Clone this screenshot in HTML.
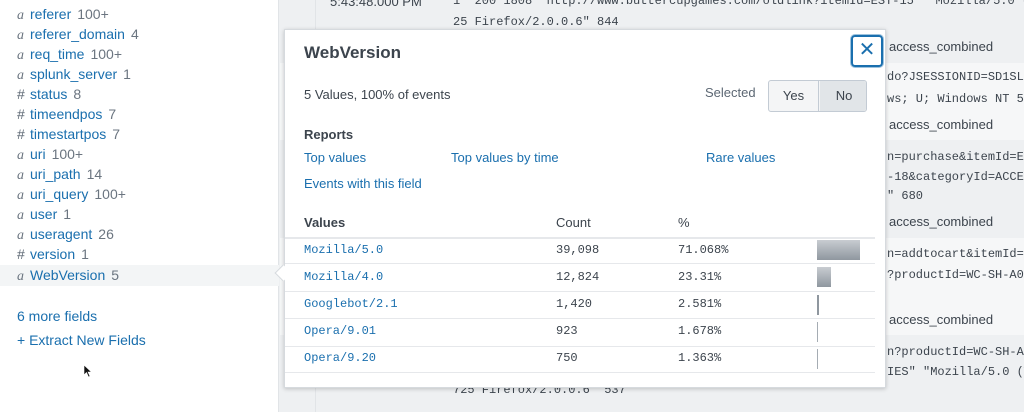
<!DOCTYPE html>
<html><head><meta charset="utf-8"><style>
*{margin:0;padding:0;box-sizing:border-box}
body{width:1024px;height:412px;overflow:hidden;position:relative;background:#eef0f2;font-family:"Liberation Sans",sans-serif;color:#3c444d}
.abs{position:absolute;white-space:nowrap}
.side{position:absolute;left:0;top:0;width:279px;height:412px;background:#fff;border-right:1px solid #e1e4e7}
.f{position:absolute;left:17px;font-size:14px;line-height:16px}
.f i{font-family:"Liberation Serif",serif;color:#6b7580;display:inline-block;width:13px}
.f b{font-weight:normal;color:#5c6773;display:inline-block;width:13px}
.f span{color:#1a6fae}
.f em{font-style:normal;color:#6b7580;margin-left:6px}
.mono{font-family:"Liberation Mono",monospace;font-size:12px;color:#3c444d}
.band{position:absolute;left:280px;right:0;background:#f6f7f8}
.pop{position:absolute;left:284px;top:29px;width:602px;height:359px;background:#fff;border:1px solid #d6dade;box-shadow:0 1px 4px rgba(0,0,0,.2)}
.lnk{color:#1a6fae;font-size:13px}
.row{position:absolute;left:0;width:590px;height:1px;background:#e6e8eb}
.v{font-family:"Liberation Mono",monospace;font-size:12px}
</style></head><body>
<div class="band" style="top:63px;height:77px"></div>
<div class="band" style="top:238px;height:97px"></div>
<div class="abs" style="left:315px;top:0;width:1px;height:412px;background:#e1e4e7"></div>
<div class="abs" style="left:330px;top:-6px;font-size:13px;color:#3c444d">5:43:48.000 PM</div>
<div class="abs mono" style="left:453px;top:-6px">1" 200 1808 "http://www.buttercupgames.com/oldlink?itemId=EST-15" "Mozilla/5.0 (W</div>
<div class="abs mono" style="left:453px;top:15px">25 Firefox/2.0.0.6" 844</div>
<div class="abs mono" style="left:453px;top:383px">725 Firefox/2.0.0.6" 537</div>
<div class="abs" style="left:889px;top:39px;font-size:13px">access_combined</div>
<div class="abs mono" style="left:887px;top:70px">do?JSESSIONID=SD1SL</div>
<div class="abs mono" style="left:887px;top:92px">ws; U; Windows NT 5</div>
<div class="abs" style="left:889px;top:117px;font-size:13px">access_combined</div>
<div class="abs mono" style="left:887px;top:150px">n=purchase&amp;itemId=ES</div>
<div class="abs mono" style="left:887px;top:170px">-18&amp;categoryId=ACCES</div>
<div class="abs mono" style="left:887px;top:189px">" 680</div>
<div class="abs" style="left:889px;top:214px;font-size:13px">access_combined</div>
<div class="abs mono" style="left:887px;top:247px">n=addtocart&amp;itemId=E</div>
<div class="abs mono" style="left:887px;top:268px">?productId=WC-SH-A0</div>
<div class="abs" style="left:889px;top:312px;font-size:13px">access_combined</div>
<div class="abs mono" style="left:887px;top:345px">n?productId=WC-SH-A0</div>
<div class="abs mono" style="left:887px;top:365px">IES" "Mozilla/5.0 (W</div>

<div class="side">
<div class="f" style="top:6px"><i>a</i><span>referer</span><em>100+</em></div>
<div class="f" style="top:26px"><i>a</i><span>referer_domain</span><em>4</em></div>
<div class="f" style="top:46px"><i>a</i><span>req_time</span><em>100+</em></div>
<div class="f" style="top:66px"><i>a</i><span>splunk_server</span><em>1</em></div>
<div class="f" style="top:86px"><b>#</b><span>status</span><em>8</em></div>
<div class="f" style="top:106px"><b>#</b><span>timeendpos</span><em>7</em></div>
<div class="f" style="top:126px"><b>#</b><span>timestartpos</span><em>7</em></div>
<div class="f" style="top:146px"><i>a</i><span>uri</span><em>100+</em></div>
<div class="f" style="top:166px"><i>a</i><span>uri_path</span><em>14</em></div>
<div class="f" style="top:186px"><i>a</i><span>uri_query</span><em>100+</em></div>
<div class="f" style="top:206px"><i>a</i><span>user</span><em>1</em></div>
<div class="f" style="top:226px"><i>a</i><span>useragent</span><em>26</em></div>
<div class="f" style="top:246px"><b>#</b><span>version</span><em>1</em></div>
<div class="abs" style="left:0;top:265px;width:279px;height:21px;background:#f3f5f6"></div>
<div class="f" style="top:267px"><i>a</i><span>WebVersion</span><em>5</em></div>
<div class="abs lnk" style="left:17px;top:308px;font-size:14px">6 more fields</div>
<div class="abs lnk" style="left:17px;top:332px;font-size:14px">+ Extract New Fields</div>
<svg class="abs" style="left:83px;top:365px" width="9" height="13" viewBox="0 0 9 13"><path d="M1 0 L1 10 L3.5 7.5 L5.5 12 L7 11.3 L5 7 L8.5 7 Z" fill="#111" stroke="#fff" stroke-width=".6"/></svg>
</div>

<div class="pop">
<div class="abs" style="left:19px;top:13px;font-size:17px;font-weight:bold;color:#3c444d">WebVersion</div>
<div class="abs" style="left:566px;top:5px;width:32px;height:32px;border:2px solid #1a6fae;border-radius:4px;box-shadow:0 0 0 1px #9ec3de;color:#1a6fae;font-size:20px;line-height:27px;text-align:center">&#x2715;</div>
<div class="abs" style="left:19px;top:57px;font-size:13px">5 Values, 100% of events</div>
<div class="abs" style="left:420px;top:55px;font-size:13px;color:#5c6773">Selected</div>
<div class="abs" style="left:483px;top:50px;width:99px;height:32px;border:1px solid #c3cbd4;border-radius:3px;background:#f4f5f6;overflow:hidden">
<div class="abs" style="left:0;top:0;width:50px;height:30px;border-right:1px solid #c3cbd4;text-align:center;line-height:30px;font-size:13px">Yes</div>
<div class="abs" style="left:51px;top:0;width:48px;height:30px;background:#e1e5e8;text-align:center;line-height:30px;font-size:13px">No</div>
</div>
<div class="abs" style="left:19px;top:97px;font-size:13px;font-weight:bold">Reports</div>
<div class="abs lnk" style="left:19px;top:120px">Top values</div>
<div class="abs lnk" style="left:166px;top:120px">Top values by time</div>
<div class="abs lnk" style="left:421px;top:120px">Rare values</div>
<div class="abs lnk" style="left:19px;top:146px">Events with this field</div>
<div class="abs" style="left:19px;top:185px;font-size:13px;font-weight:bold">Values</div>
<div class="abs" style="left:271px;top:185px;font-size:13px">Count</div>
<div class="abs" style="left:393px;top:185px;font-size:13px">%</div>
<div class="row" style="top:207px;height:2px"></div>
<div class="row" style="top:233px"></div>
<div class="row" style="top:261px"></div>
<div class="row" style="top:288px"></div>
<div class="row" style="top:316px"></div>
<div class="row" style="top:342px"></div>
<div class="abs v lnk" style="left:19px;top:213px;font-size:12px;font-family:'Liberation Mono',monospace">Mozilla/5.0</div>
<div class="abs v" style="left:271px;top:213px">39,098</div>
<div class="abs v" style="left:393px;top:213px">71.068%</div>
<div class="abs" style="left:532px;top:210px;width:43px;height:20px;background:linear-gradient(#c8ccd1,#8f979f)"></div>
<div class="abs v lnk" style="left:19px;top:240px;font-size:12px;font-family:'Liberation Mono',monospace">Mozilla/4.0</div>
<div class="abs v" style="left:271px;top:240px">12,824</div>
<div class="abs v" style="left:393px;top:240px">23.31%</div>
<div class="abs" style="left:532px;top:237px;width:14px;height:20px;background:linear-gradient(#c8ccd1,#8f979f)"></div>
<div class="abs v lnk" style="left:19px;top:267px;font-size:12px;font-family:'Liberation Mono',monospace">Googlebot/2.1</div>
<div class="abs v" style="left:271px;top:267px">1,420</div>
<div class="abs v" style="left:393px;top:267px">2.581%</div>
<div class="abs" style="left:532px;top:265px;width:2px;height:20px;background:#8f979f"></div>
<div class="abs v lnk" style="left:19px;top:294px;font-size:12px;font-family:'Liberation Mono',monospace">Opera/9.01</div>
<div class="abs v" style="left:271px;top:294px">923</div>
<div class="abs v" style="left:393px;top:294px">1.678%</div>
<div class="abs" style="left:532px;top:292px;width:1px;height:20px;background:#a5acb3"></div>
<div class="abs v lnk" style="left:19px;top:321px;font-size:12px;font-family:'Liberation Mono',monospace">Opera/9.20</div>
<div class="abs v" style="left:271px;top:321px">750</div>
<div class="abs v" style="left:393px;top:321px">1.363%</div>
<div class="abs" style="left:532px;top:319px;width:1px;height:20px;background:#a5acb3"></div>
</div>
<div class="abs" style="left:277px;top:267px;width:12px;height:12px;background:#fff;border-left:1px solid #d6dade;border-bottom:1px solid #d6dade;transform:rotate(45deg)"></div>
</body></html>
